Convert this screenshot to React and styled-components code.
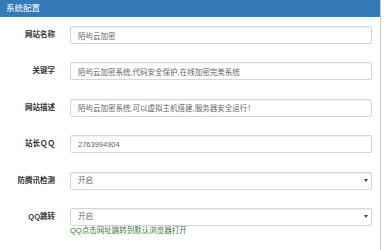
import React from 'react';
import styled, { createGlobalStyle } from 'styled-components';

const GlobalStyle = createGlobalStyle`
    html, body {
        margin: 0;
        padding: 0;
        background: #fff;
        font-family: "Liberation Sans", "Noto Sans CJK SC", sans-serif;
    }
`;

const Panel = styled.div`
    width: 380px;
    height: 250px;
    border-right: 1px solid #c8c8c8;
    background: #fff;
`;

const Heading = styled.div`
    height: 17px;
    line-height: 17px;
    padding-left: 6px;
    background-color: #337ab7;
    color: #fff;
    font-size: 8.5px;
`;

const Form = styled.div`
    padding: 9px 8px 0 0;
`;

const Group = styled.div`
    display: grid;
    grid-template-columns: 55px 1fr;
    column-gap: 15px;
    align-items: start;
    margin-bottom: 18.4px;
`;

const Label = styled.label`
    text-align: right;
    font-weight: bold;
    font-size: 7.5px;
    color: #333;
    line-height: 18px;
    white-space: nowrap;
`;

const Field = styled.div`
    position: relative;
`;

const Input = styled.input`
    box-sizing: border-box;
    display: block;
    width: 100%;
    height: 18px;
    padding: 0 7px;
    border: 1px solid #d6d6d6;
    border-radius: 2px;
    box-shadow: inset 0 1px 1px rgba(0, 0, 0, 0.06);
    font-family: inherit;
    font-size: 7.5px;
    color: #666;
    outline: none;
    background: #fff;
`;

const Select = styled.select`
    box-sizing: border-box;
    display: block;
    width: 100%;
    height: 18px;
    padding: 0 7px;
    border: 1px solid #d6d6d6;
    border-radius: 2px;
    box-shadow: inset 0 1px 1px rgba(0, 0, 0, 0.06);
    font-family: inherit;
    font-size: 7.5px;
    color: #666;
    outline: none;
    background: #fff;
    appearance: none;
`;

const Arrow = styled.span`
    position: absolute;
    right: 4px;
    top: 7px;
    width: 0;
    height: 0;
    border-left: 2px solid transparent;
    border-right: 2px solid transparent;
    border-top: 3px solid #444;
    pointer-events: none;
`;

const Help = styled.div`
    margin-top: 0;
    font-size: 7.5px;
    color: #3c763d;
    line-height: 9px;
`;

const fields = [
    { label: '网站名称', value: '陌屿云加密' },
    { label: '关键字', value: '陌屿云加密系统,代码安全保护,在线加密完美系统' },
    { label: '网站描述', value: '陌屿云加密系统,可以虚拟主机搭建,服务器安全运行！' },
    { label: '站长ＱＱ', value: '2763994904' },
];

const selects = [
    { label: '防腾讯检测', value: '开启' },
    { label: 'QQ跳转', value: '开启', help: 'QQ点击网址跳转到默认浏览器打开' },
];

const App = () => {
    return (
        <>
            <GlobalStyle />
            <Panel>
                <Heading>系统配置</Heading>
                <Form>
                    {fields.map((f) => (
                        <Group key={f.label}>
                            <Label>{f.label}</Label>
                            <Field>
                                <Input type="text" defaultValue={f.value} />
                            </Field>
                        </Group>
                    ))}
                    {selects.map((s) => (
                        <Group key={s.label}>
                            <Label>{s.label}</Label>
                            <Field>
                                <Select defaultValue={s.value}>
                                    <option value="开启">开启</option>
                                    <option value="关闭">关闭</option>
                                </Select>
                                <Arrow />
                                {s.help && <Help>{s.help}</Help>}
                            </Field>
                        </Group>
                    ))}
                </Form>
            </Panel>
        </>
    );
};

export default App;
